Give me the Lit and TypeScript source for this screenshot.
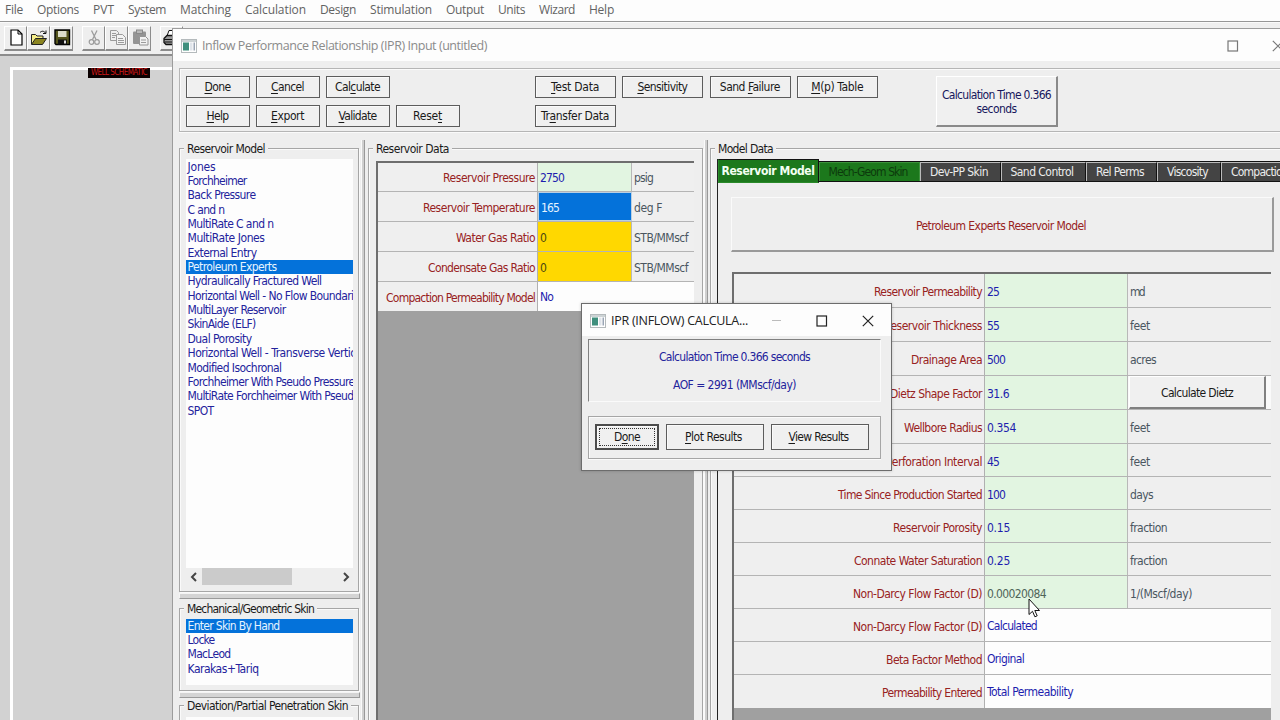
import { LitElement, html, css, svg } from "lit";
import { customElement, property } from "lit/decorators.js";
import { classMap } from "lit/directives/class-map.js";

/* Single line of text tracked so that it fills a given width. */
@customElement("fit-text")
class FitText extends LitElement {
  @property({ type: Number }) w = 0;
  @property() text = "";
  @property({ type: Number }) key = -1;
  static styles = css`
    :host { display: inline-block; white-space: pre; }
    .u { text-decoration: underline; text-underline-offset: 1.5px; }
  `;
  updated() {
    const n = this.text.length;
    if (!this.w || !n) return;
    this.style.letterSpacing = "0px";
    const natural = this.getBoundingClientRect().width;
    const gap = (this.w - natural) / n;
    this.style.letterSpacing = gap.toFixed(3) + "px";
  }
  render() {
    const t = this.text, k = this.key;
    if (k < 0) return html`${t}`;
    return html`${t.slice(0, k)}<span class="u">${t[k]}</span>${t.slice(k + 1)}`;
  }
}

const f = (text: string, w: number, key = -1) =>
  html`<fit-text .text=${text} .w=${w} .key=${key}></fit-text>`;

type Item = [string, number];
const menu: Item[] = [
  ["File", 18], ["Options", 42], ["PVT", 21], ["System", 38], ["Matching", 51],
  ["Calculation", 61], ["Design", 36], ["Stimulation", 62], ["Output", 38],
  ["Units", 27], ["Wizard", 36], ["Help", 25],
];
const models: Item[] = [
  ["Jones", 28], ["Forchheimer", 59], ["Back Pressure", 68], ["C and n", 37], ["MultiRate C and n", 86],
  ["MultiRate Jones", 77], ["External Entry", 69], ["Petroleum Experts", 89], ["Hydraulically Fractured Well", 134],
  ["Horizontal Well - No Flow Boundaries", 177], ["MultiLayer Reservoir", 98], ["SkinAide (ELF)", 68],
  ["Dual Porosity", 64], ["Horizontal Well - Transverse Vertical", 177], ["Modified Isochronal", 94],
  ["Forchheimer With Pseudo Pressure", 167], ["MultiRate Forchheimer With Pseudo", 172], ["SPOT", 26],
];
const skins: Item[] = [["Enter Skin By Hand", 92], ["Locke", 27], ["MacLeod", 43], ["Karakas+Tariq", 71]];

type Row = { l: string; lw: number; v: string; vw: number; u?: string; uw?: number; c?: string; h: number };
const resRows: Row[] = [
  { l: "Reservoir Pressure", lw: 92, v: "2750", vw: 24, u: "psig", uw: 19, c: "green", h: 29 },
  { l: "Reservoir Temperature", lw: 112, v: "165", vw: 18, u: "deg F", uw: 28, c: "blue", h: 30 },
  { l: "Water Gas Ratio", lw: 79, v: "0", vw: 6, u: "STB/MMscf", uw: 54, c: "gold", h: 30 },
  { l: "Condensate Gas Ratio", lw: 107, v: "0", vw: 6, u: "STB/MMscf", uw: 54, c: "gold", h: 30 },
  { l: "Compaction Permeability Model", lw: 149, v: "No", vw: 13, h: 29 },
];
const modelRows: Row[] = [
  { l: "Reservoir Permeability", lw: 108, v: "25", vw: 12, u: "md", uw: 14, c: "green", h: 34 },
  { l: "Reservoir Thickness", lw: 98, v: "55", vw: 12, u: "feet", uw: 20, c: "green", h: 34 },
  { l: "Drainage Area", lw: 71, v: "500", vw: 18, u: "acres", uw: 26, c: "green", h: 34 },
  { l: "Dietz Shape Factor", lw: 92, v: "31.6", vw: 22, u: "@", c: "green", h: 34 },
  { l: "Wellbore Radius", lw: 78, v: "0.354", vw: 29, u: "feet", uw: 20, c: "green", h: 34 },
  { l: "Perforation Interval", lw: 96, v: "45", vw: 12, u: "feet", uw: 20, c: "green", h: 33 },
  { l: "Time Since Production Started", lw: 144, v: "100", vw: 18, u: "days", uw: 23, c: "green", h: 33 },
  { l: "Reservoir Porosity", lw: 89, v: "0.15", vw: 23, u: "fraction", uw: 37, c: "green", h: 33 },
  { l: "Connate Water Saturation", lw: 128, v: "0.25", vw: 23, u: "fraction", uw: 37, c: "green", h: 33 },
  { l: "Non-Darcy Flow Factor (D)", lw: 129, v: "0.00020084", vw: 59, u: "1/(Mscf/day)", uw: 62, c: "green off", h: 33 },
  { l: "Non-Darcy Flow Factor (D)", lw: 129, v: "Calculated", vw: 50, h: 33 },
  { l: "Beta Factor Method", lw: 96, v: "Original", vw: 37, h: 33 },
  { l: "Permeability Entered", lw: 100, v: "Total Permeability", vw: 86, h: 33 },
];

const appIcon = html`<svg width="16" height="14" viewBox="0 0 16 14">
  <rect x=".5" y=".5" width="15" height="13" fill="#fff" stroke="#b4babc" />
  <rect x="1" y="1" width="14" height="2" fill="#cdd3d5" />
  <rect x="2" y="3.5" width="6" height="8" fill="#3f8f7d" />
  <rect x="9" y="3.5" width="2.5" height="8" fill="#dfe4ea" />
  <rect x="12.5" y="3.5" width="1.5" height="8" fill="#9aa5b5" />
</svg>`;

const ic = {
  fresh: svg`<path d="M5 2h7l4 4v11h-11z" fill="#fff" stroke="#000" stroke-width="1.2"/><path d="M12 2v4h4" fill="none" stroke="#000"/>`,
  open: svg`<path d="M2.5 16V6.5h4l1.5 1.500h6v3" fill="#f5ee8a" stroke="#222" /><path d="M2.500 16.500l4-6h11l-4 6z" fill="#8a8420" stroke="#222"/><path d="M11 4.500c2-2 4-1.500 5.500.5M17 2.500v3h-3" fill="none" stroke="#111"/>`,
  save: svg`<path d="M3 2h14.500v14.500h-13.500l-1-1z" fill="#55551c" stroke="#000" stroke-width="1.400"/><rect x="6" y="3" width="8.500" height="6" fill="#dcdcc8"/><rect x="6" y="11.500" width="9" height="5" fill="#111"/><rect x="12" y="12.500" width="2" height="3" fill="#ddd"/>`,
  cut: svg`<path d="M7.500 2.500l4.500 9M13 2.500l-4.500 9" fill="none" stroke="#9b9b9b" stroke-width="1.300"/><circle cx="7.500" cy="14" r="2.300" fill="none" stroke="#9b9b9b" stroke-width="1.200"/><circle cx="13" cy="14" r="2.300" fill="none" stroke="#9b9b9b" stroke-width="1.200"/>`,
  copy: svg`<path d="M3.500 2.500h6l2 2v8h-8z" fill="#eee" stroke="#9b9b9b"/><path d="M5 5.500h4M5 7.500h4M5 9.500h3" stroke="#9b9b9b"/><path d="M9.500 6.500h6l3 3v7h-9z" fill="#f2f2f2" stroke="#9b9b9b"/><path d="M11 10.500h5M11 12.500h6M11 14.500h6" stroke="#9b9b9b"/>`,
  paste: svg`<rect x="3" y="3.500" width="13" height="12.500" rx="1" fill="#949494"/><rect x="6.500" y="2" width="6" height="3.500" fill="#b9b9b9" stroke="#888"/><path d="M9.500 8.500h6l2.500 2.500v6h-8.500z" fill="#f2f2f2" stroke="#959595"/><path d="M11 12h5M11 14.500h5" stroke="#9b9b9b"/>`,
  print: svg`<path d="M5 8l2-5.500h9l-2 5.500z" fill="#fff" stroke="#111"/><path d="M2 10.500l3-3h11l2 3v4l-2 2h-12l-2-2z" fill="#999" stroke="#111" stroke-width="1.300"/><path d="M2 11.500h15M3 14h13" stroke="#111"/>`,
};
const tool = (g: unknown) => html`<div class="tool"><svg width="20" height="19" viewBox="0 0 20 19">${g}</svg></div>`;
const btn = (t: string, w: number, key: number) => html`<div class="btn">${f(t, w, key)}</div>`;

const grid = (rows: Row[], cls: string) => html`<div class="grid ${cls}">
  ${rows.map((r) => html`<div class="row" style="height:${r.h}px">
    <div class="lab">${f(r.l, r.lw)}</div>
    <div class="val ${r.c ?? "wide"}">${f(r.v, r.vw)}</div>
    ${r.u === "@" ? html`<div class="unit flush"><div class="dietz">${f("Calculate Dietz", 72)}</div></div>`
      : r.u ? html`<div class="unit">${f(r.u, r.uw!)}</div>` : ""}
  </div>`)}
</div>`;

const winControls = html`
  <svg class="max" width="12" height="12"><rect x="1" y="1" width="9.500" height="10" fill="none" stroke="currentColor" stroke-width="1.200"/></svg>
  <svg class="x" width="12" height="12"><path d="M.8.8l10.400 10.400M11.200.8L.8 11.200" stroke="currentColor" stroke-width="1.200"/></svg>`;

@customElement("app-root")
class AppRoot extends LitElement {
  static styles = css`
    :host { display: block; position: relative; width: 1280px; height: 720px; overflow: hidden;
      background: #d2d2d2; color: #1a1a1a; font: 12px/14.4px "DejaVu Sans Condensed", "DejaVu Sans", sans-serif;
      font-stretch: condensed; }
    * { box-sizing: border-box; }
    svg { display: block; flex: none; }
    .menubar { display: grid; grid-template-columns: 32px 56px 35px 52px 65px 75px 50px 76px 52px 41px 50px 60px;
      height: 21px; padding-left: 5px; background: #fdfdfd; color: #626262;
      font: 12px/20px "Open Sans", "Noto Sans", sans-serif; font-stretch: normal; }
    .toolbar { display: flex; height: 35px; padding: 4px 0 0 4px; background: #efefef;
      border-top: 1px solid #969696; border-bottom: 2px solid #8c8c8c; box-shadow: inset 0 1px #fafafa; }
    .tool { width: 23px; height: 25px; padding: 1px; border: 1px solid #fff; border-right-color: #8b8b8b;
      border-bottom: 2px solid #8b8b8b; background: #eee; }
    .gap { width: 9px; }
    .canvas { display: flex; justify-content: flex-start; height: 664px; padding: 11px 0 0 10px; }
    .sheet { width: 180px; border: solid #fff; border-width: 3px 0 0 3px; }
    .well { width: 62px; height: 10px; margin: -2px 0 0 75px; background: #0a0000; color: #d01818; padding-left: 3px;
      font: 8px/10px "DejaVu Sans Condensed", sans-serif; }

    .window { position: absolute; left: 172px; top: 28px; width: 1110px; height: 700px; background: #eee;
      border: 1px solid #9c9c9c; }
    .title { display: flex; align-items: center; height: 32px; padding: 1px 0 0 8px; background: #fdfdfd; color: #8b8b8b;
      font: 12.500px/16px "Open Sans", "Noto Sans", sans-serif; }
    .title fit-text { margin-left: 5px; }
    .title .max { margin-left: 740px; color: #777; }
    .title .x { margin-left: 33px; color: #777; }
    .body { padding: 7px 0 0 6px; }
    .actions { display: flex; height: 64px; border: 1px solid #b5b5b5; border-right: 0; padding: 7px 0 0 6px;
      box-shadow: inset 1px 1px #fafafa, 0 1px #fafafa; }
    .left { display: grid; grid-template-columns: repeat(4, 64px); grid-auto-rows: 23px; gap: 6px; width: 349px; }
    .right { display: grid; grid-template-columns: repeat(4, 81px); grid-auto-rows: 23px; gap: 6px 6.400px; width: 401px; }
    .btn { display: flex; align-items: center; justify-content: center; height: 22px; padding-top: 1px; border: 1px solid #5c5c5c;
      background: #f0f0f0; box-shadow: inset 1px 1px #fafafa; }
    .left .btn, .right .btn { padding-right: 1px; }
    .info { width: 122px; height: 51px; padding-top: 11px; text-align: center; color: #17175c; background: #f0f0f0;
      border: solid; border-width: 1px 2px 2px 1px; border-color: #fff #8a8a8a #8a8a8a #fff; }
    .info fit-text { display: block; width: max-content; margin: 0 auto; }

    .columns { display: flex; margin-top: 8px; height: 600px; }
    .columns > * { flex: none; }
    .stack { width: 181px; padding-top: 1px; }
    .group { position: relative; display: flow-root; border: 1px solid #a6a6a6; box-shadow: inset 1px 1px #fafafa, 1px 1px #fafafa; margin-top: 7px; }
    .legend { display: table; height: 14px; margin: -7px 0 0 4px; padding: 0 3px; background: #eee; line-height: 14px; }
    .list { width: 167px; margin-left: 6px; background: #fdfdfd; color: #23239c; overflow: hidden; }
    .item { height: 14.350px; padding-left: 1.500px; white-space: nowrap; line-height: 14.350px; }
    .sel { background: #0472da; color: #e6f4ff; }
    .g1 { height: 444px; width: 180px; } .g1 .list { height: 409px; margin-top: 3px; padding-top: .7px; }
    .g2 { height: 83px; width: 180px; margin-top: 9px; } .g2 .list { height: 66px; margin-top: 2.500px; }
    .g3 { height: 100px; width: 180px; margin-top: 7px; } .g3 .list { height: 66px; margin-top: 4px; }
    .hsplit { height: 6px; width: 181px; margin-top: 1px; background: #d4d4d4; border: 1px solid #f4f4f4; border-bottom-color: #9a9a9a; border-right-color: #9a9a9a; }
    .vsplit { width: 4px; height: 600px; background: #cfcfcf; border-left: 1px solid #fafafa; border-right: 1px solid #999; }
    .scroll { display: flex; align-items: center; justify-content: space-between; width: 168px; height: 17px; margin-left: 6px; padding: 0 4px; }
    .thumb { width: 90px; height: 17px; margin-right: 46px; background: #cbcbcb; }

    .g4 { width: 335px; height: 600px; margin: 8px 1px 0 3px; }
    .g5 { width: 600px; height: 600px; margin: 8px 0 0 2px; border-right: 0; }
    .vsplit.a { margin-left: 1px; }
    .grid { background: #a0a0a0; border: 2px solid #6e6e6e; border-right: 0; border-bottom: 0; }
    .row { display: flex; background: #efefef; border-bottom: 1px solid #b4b4b4; color: #1d1dae; }
    .row:last-child { border-bottom: 0; }
    .lab { display: flex; align-items: center; justify-content: flex-end; padding: 3px 2px 0 0; color: #982222; border-right: 1px solid #b0b0b0; }
    .val { display: flex; align-items: center; padding: 3px 0 0 2px; border-right: 1px solid #b8b8b8; }
    .unit { display: flex; align-items: center; flex: 1; padding: 3px 0 0 2px; color: #4a565f; }
    .green { background: #e2f5e1; }
    .off { color: #50655a; }
    .blue { background: #0472da; color: #e6f4ff; border: 1px solid #b9cfe2; }
    .gold { background: #ffd800; color: #4c4713; }
    .val.wide { flex: 1; background: #fdfdfd; border-right: 0; }
    .res { width: 318px; height: 590px; margin: 5px 0 0 7px; }
    .res .lab { width: 160px; } .res .val { width: 94px; } .res .wide { width: auto; padding-top: 2px; }
    .mod { width: 539px; height: 460px; margin: 20px 0 0 14px; }
    .mod .lab { width: 251px; padding-top: 4px; } .mod .val { width: 143px; padding-top: 4px; } .mod .wide { width: auto; padding-top: 2px; }
    .mod .unit { padding-top: 4px; }
    .mod .unit.flush { padding: 0 3px 0 1px; background: #fafafa; }
    .dietz { display: flex; align-items: center; justify-content: center; width: 137px; height: 33px; padding-top: 3px; color: #1a1a1a;
      background: #f0f0f0; border: solid; border-width: 1px 2px 2px 1px; border-color: #fff #808080 #808080 #fff; }

    .tabpage { margin: 3px 0 0 6px; border-left: 1px solid #222; height: 600px; }
    .tabs { display: flex; align-items: flex-end; height: 23px; width: 700px; border-bottom: 1px solid #111; }
    .tab { flex: none; display: flex; align-items: center; justify-content: center; height: 19px; padding: 1px 3px 0 0; background: #444; color: #ececec;
      border: 1px solid #bbb; border-width: 1px 1px 0 1px; border-right-color: #111; box-shadow: 0 -1px #111; overflow: hidden; }
    .tab.on { height: 24px; padding: 0 1px 0 0; margin-bottom: -2px; background: #1c781c; color: #f2fff2; font-weight: bold; border: 1px solid #2a8a2a;
      border-right-color: #111; border-top-color: #111; box-shadow: none; }
    .tab.mech { background: #1c781c; color: #0c3a0c; border-color: #3c913c; }
    .msg { display: flex; align-items: center; justify-content: center; width: 543px; height: 55px; margin: 15px 0 0 13px; padding: 5px 2px 0 0; color: #982222;
      border: 1px solid #fafafa; border-bottom: 2px solid #999; border-right: 2px solid #999; }

    .dialog { position: absolute; left: 581px; top: 303px; width: 311px; height: 168px; background: #eee; border: 1px solid #6c6c6c; box-shadow: 0 0 3px #0003; }
    .dtitle { display: flex; align-items: center; height: 32px; padding: 1px 0 0 8px; background: #fdfdfd; color: #222;
      font: 12.500px/16px "Open Sans", "Noto Sans", sans-serif; }
    .dtitle fit-text { margin-left: 5px; }
    .min { width: 9px; height: 1px; margin-left: 24px; background: #bbb; }
    .dtitle .max { margin-left: 35px; } .dtitle .x { margin-left: 34px; }
    .result { display: flex; flex-direction: column; align-items: center; gap: 14px; width: 293px; height: 63px; margin: 3px 0 0 6px; padding-top: 10px;
      color: #23239c; border: solid; border-width: 1px; border-color: #808080 #fafafa #fafafa #808080; }
    .buttons { display: flex; gap: 7px; width: 293px; height: 43px; margin: 14px 0 0 6px; padding: 7px 0 0 6px; border: 1px solid #a6a6a6; box-shadow: inset 1px 1px #fafafa, 0 1px #fafafa; }
    .buttons .btn { width: 98px; height: 26px; padding: 0 3px 0 0; }
    .buttons .btn.def { width: 64px; border: 2px solid #4c4c4c; padding: 2px; }
    .focus { display: flex; flex: 1; height: 18px; align-items: center; justify-content: center; border: 1px dotted #333; }
    .cursor { position: absolute; left: 1028px; top: 598px; }
  `;

  render() {
    return html`
      <div class="menubar">${menu.map(([t, w]) => html`<div>${f(t, w)}</div>`)}</div>
      <div class="toolbar">
        ${tool(ic.fresh)}${tool(ic.open)}${tool(ic.save)}<div class="gap"></div>
        ${tool(ic.cut)}${tool(ic.copy)}${tool(ic.paste)}<div class="gap"></div>${tool(ic.print)}
      </div>
      <div class="canvas"><div class="sheet"><div class="well">${f("WELL SCHEMATIC", 56)}</div></div></div>

      <div class="window">
        <div class="title">${appIcon}${f("Inflow Performance Relationship (IPR) Input (untitled)", 285)}${winControls}</div>
        <div class="body">
          <div class="actions">
            <div class="left">
              ${btn("Done", 26, 0)}${btn("Cancel", 33, 0)}${btn("Calculate", 45, 3)}<span></span>
              ${btn("Help", 22, 0)}${btn("Export", 33, 0)}${btn("Validate", 38, 0)}${btn("Reset", 29, 4)}
            </div>
            <div class="right">
              ${btn("Test Data", 48, 0)}${btn("Sensitivity", 50, 0)}${btn("Sand Failure", 60, 5)}${btn("M(p) Table", 52, 0)}
              ${btn("Transfer Data", 68, 2)}
            </div>
            <div class="info">${f("Calculation Time 0.366", 109)}${f("seconds", 40)}</div>
          </div>
          <div class="columns">
            <div class="stack">
              <div class="group g1">
                <div class="legend">${f("Reservoir Model", 78)}</div>
                <div class="list">${models.map(([t, w], i) => html`<div class=${classMap({ item: true, sel: i === 7 })}>${f(t, w)}</div>`)}</div>
                <div class="scroll">
                  <svg width="8" height="10"><path d="M6 1L2 5l4 4" fill="none" stroke="#444" stroke-width="2"/></svg>
                  <div class="thumb"></div>
                  <svg width="8" height="10"><path d="M2 1l4 4-4 4" fill="none" stroke="#444" stroke-width="2"/></svg>
                </div>
              </div>
              <div class="hsplit"></div>
              <div class="group g2">
                <div class="legend">${f("Mechanical/Geometric Skin", 127)}</div>
                <div class="list">${skins.map(([t, w], i) => html`<div class=${classMap({ item: true, sel: i === 0 })}>${f(t, w)}</div>`)}</div>
              </div>
              <div class="hsplit"></div>
              <div class="group g3">
                <div class="legend">${f("Deviation/Partial Penetration Skin", 161)}</div>
                <div class="list"></div>
              </div>
            </div>
            <div class="vsplit a"></div>
            <div class="group g4"><div class="legend">${f("Reservoir Data", 73)}</div>${grid(resRows, "res")}</div>
            <div class="vsplit"></div>
            <div class="group g5">
              <div class="legend">${f("Model Data", 55)}</div>
              <div class="tabpage">
                <div class="tabs">
                  <div class="tab on" style="width:101px">${f("Reservoir Model", 93)}</div>
                  <div class="tab mech" style="width:101px">${f("Mech-Geom Skin", 79)}</div>
                  <div class="tab" style="width:81px">${f("Dev-PP Skin", 58)}</div>
                  <div class="tab" style="width:85px">${f("Sand Control", 63)}</div>
                  <div class="tab" style="width:71px">${f("Rel Perms", 48)}</div>
                  <div class="tab" style="width:64px">${f("Viscosity", 41)}</div>
                  <div class="tab" style="width:80px">${f("Compaction", 57)}</div>
                </div>
                <div class="msg">${f("Petroleum Experts Reservoir Model", 170)}</div>
                ${grid(modelRows, "mod")}
              </div>
            </div>
          </div>
        </div>
      </div>

      <div class="dialog">
        <div class="dtitle">${appIcon}${f("IPR (INFLOW) CALCULA...", 137)}<div class="min"></div>${winControls}</div>
        <div class="result">${f("Calculation Time 0.366 seconds", 151)}${f("AOF = 2991 (MMscf/day)", 123)}</div>
        <div class="buttons"><div class="btn def"><div class="focus">${f("Done", 26, 1)}</div></div>${btn("Plot Results", 57, 0)}${btn("View Results", 60, 0)}</div>
      </div>
      <svg class="cursor" width="13" height="20"><path d="M1 1v15.500l3.500-3.200 2.400 5.500 2.300-1-2.400-5.300h4.700z" fill="#fff" stroke="#111"/></svg>
    `;
  }
}
